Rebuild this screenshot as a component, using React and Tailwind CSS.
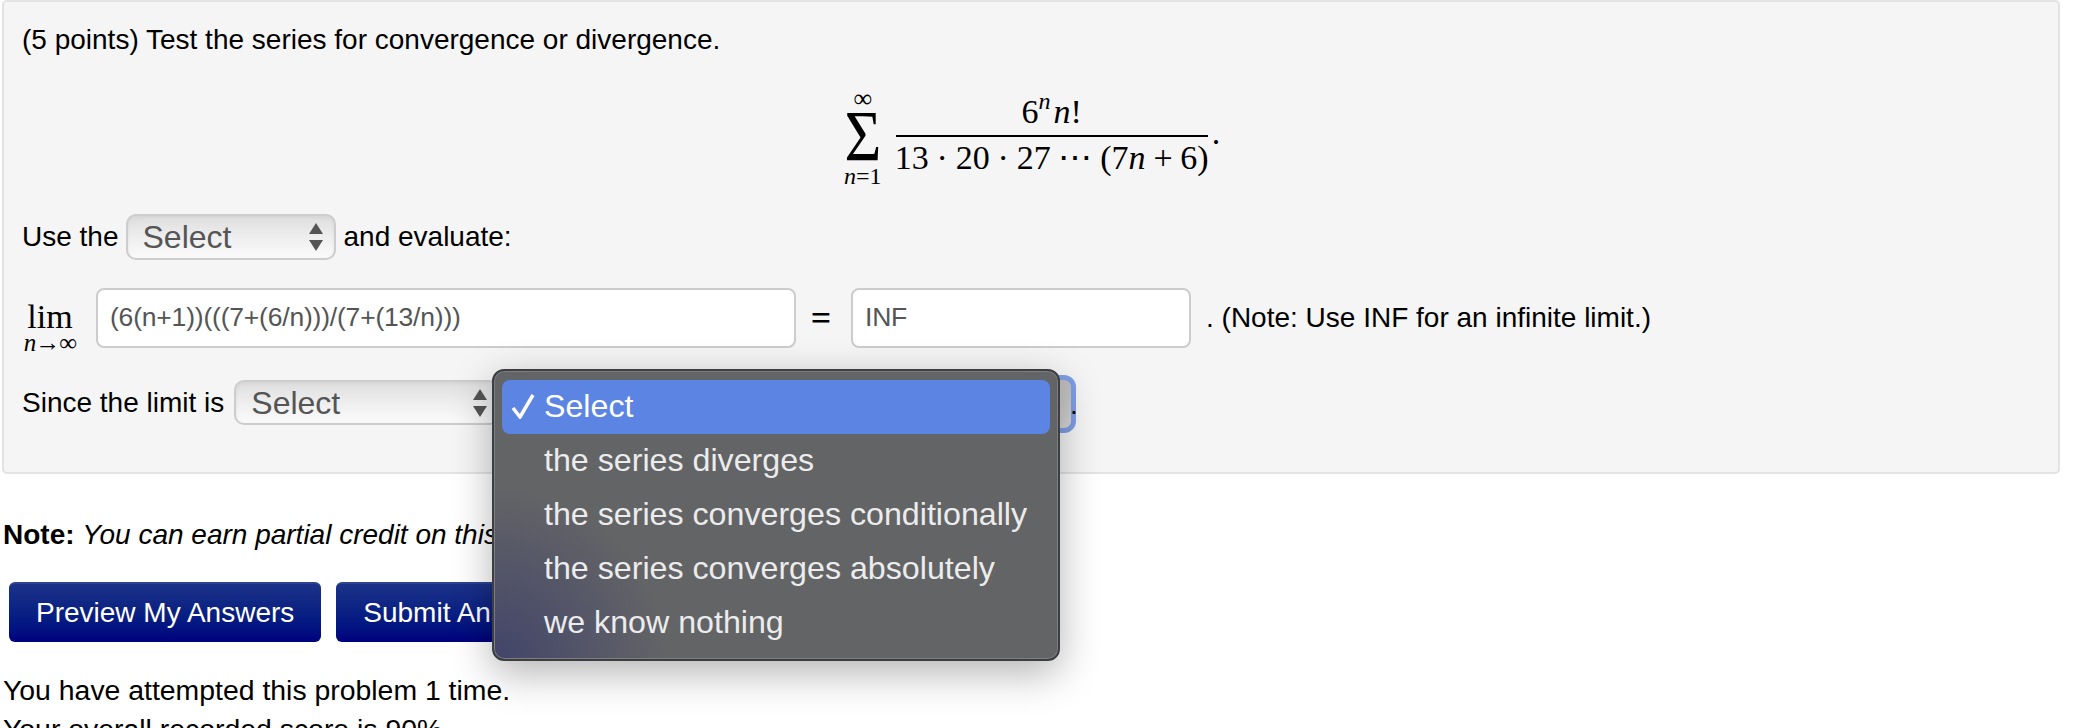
const menuOptions = [
  "the series diverges",
  "the series converges conditionally",
  "the series converges absolutely",
  "we know nothing",
];

function SelectBox({ className = "" }) {
  return (
    <div
      className={`flex shrink-0 items-center justify-between rounded-[10px] border-2 border-[#cdcdcd] bg-gradient-to-b from-[#dedede] via-[#eeeeee] to-[#fbfbfb] pl-[15px] pr-[11px] text-[32px] text-[#555555] shadow-[inset_0_1px_4px_rgba(0,0,0,0.06)] ${className}`}
    >
      <span>Select</span>
      <svg width="14" height="28" viewBox="0 0 14 28" className="fill-[#555555]">
        <path d="M7 0 L14 11 L0 11 Z" />
        <path d="M7 28 L14 17 L0 17 Z" />
      </svg>
    </div>
  );
}

function TextBox({ value, className = "" }) {
  return (
    <div
      className={`flex h-[60px] shrink-0 items-center rounded-[8px] border-2 border-[#cccccc] bg-white pl-[12px] text-[26.5px] tracking-[-0.2px] text-[#555555] ${className}`}
    >
      {value}
    </div>
  );
}

function SeriesFormula() {
  return (
    <div className="ml-[-16px] mt-[33px] flex h-[95px] justify-center font-['Liberation_Serif',serif] text-black">
      <div className="flex w-[38px] flex-col items-center">
        <span className="h-[16px] text-[26px] leading-[16px]">∞</span>
        <span className="h-[59px] scale-x-[0.88] text-[72px] leading-[59px]">Σ</span>
        <span className="h-[20px] whitespace-nowrap text-[24px] leading-[20px]">
          <i>n</i>=1
        </span>
      </div>
      <div className="ml-[14px] flex w-[312px] flex-col items-center">
        <div className="h-[44px] text-[34px] leading-[41px]">
          6<sup className="top-[-14px] text-[24px]"><i>n</i></sup>
          <i className="ml-[3px]">n</i>!
        </div>
        <div className="h-[2px] w-full bg-black"></div>
        <div className="whitespace-nowrap text-[34px] leading-[41px] [word-spacing:-0.7px]">
          13 · 20 · 27 ⋯ (7<i>n</i> + 6)
        </div>
      </div>
      <span className="ml-[4px] mt-[27px] text-[34px] leading-[30px]">.</span>
    </div>
  );
}

export default function App() {
  return (
    <div className="relative h-[728px] w-[2074px] overflow-hidden bg-white font-['Liberation_Sans',Arial,sans-serif] text-[28px] text-black">
      <div className="ml-[2px] flex h-[474px] w-[2058px] flex-col rounded-[5px] border-2 border-[#e3e3e3] bg-[#f5f5f5] pl-[18px]">
        <div className="mt-[20px] h-[36px] leading-[36px]">
          (5 points) Test the series for convergence or divergence.
        </div>
        <SeriesFormula />
        <div className="mt-[28px] flex h-[46px] items-center">
          <span>Use the</span>
          <SelectBox className="ml-[7px] h-[46px] w-[210px]" />
          <span className="ml-[8px]">and evaluate:</span>
        </div>
        <div className="mt-[28px] flex h-[60px] items-center">
          <div className="mt-[11px] flex w-[56px] shrink-0 flex-col items-center self-start font-['Liberation_Serif',serif]">
            <span className="text-[34px] leading-[36px]">lim</span>
            <span className="whitespace-nowrap text-[25px] leading-[16px] tracking-[-1px]">
              <i>n</i>→∞
            </span>
          </div>
          <TextBox value="(6(n+1))(((7+(6/n)))/(7+(13/n)))" className="ml-[18px] w-[700px]" />
          <span className="mr-[5px] w-[50px] shrink-0 text-center font-['Liberation_Serif',serif] text-[36px] font-bold">=</span>
          <TextBox value="INF" className="w-[340px]" />
          <span className="ml-[15px]">. (Note: Use INF for an infinite limit.)</span>
        </div>
        <div className="mt-[32px] flex h-[45px] items-center">
          <span>Since the limit is</span>
          <SelectBox className="ml-[10px] h-[45px] w-[266px]" />
        </div>
      </div>

      <div className="ml-[3px] mt-[41px] h-[40px] leading-[40px]">
        <b>Note:</b> <i>You can earn partial credit on this problem.</i>
      </div>

      <div className="ml-[9px] mt-[27px] flex gap-[15px]">
        <button className="h-[60px] rounded-[6px] border-t-2 border-[#2c4391] bg-gradient-to-b from-[#1c3288] to-[#00007e] px-[27px] text-[28px] text-white">
          Preview My Answers
        </button>
        <button className="h-[60px] rounded-[6px] border-t-2 border-[#2c4391] bg-gradient-to-b from-[#1c3288] to-[#00007e] px-[27px] text-[28px] text-white">
          Submit Answers
        </button>
      </div>

      <div className="ml-[3px] mt-[29px] text-[28.4px] leading-[39px]">
        <div>You have attempted this problem 1 time.</div>
        <div>Your overall recorded score is 90%.</div>
      </div>

      {/* focused select peeking out from under the open menu */}
      <div className="absolute left-[1000px] top-[375px] h-[58px] w-[76px] rounded-[12px] border-[5px] border-[#7f9fe6] bg-gradient-to-b from-[#bdbdbd] to-[#d8d8d8]"></div>
      <span className="absolute left-[1070px] top-[390px] leading-[30px]">.</span>

      <div className="absolute left-[492px] top-[369px] flex h-[292px] w-[568px] flex-col rounded-[12px] border-2 border-[#3e3e40] bg-[radial-gradient(ellipse_170px_170px_at_0%_100%,#42446a,#636466)] px-[8px] pt-[9px] text-[32.2px] leading-[52px] text-[#ececec] shadow-[0_12px_40px_rgba(0,0,0,0.3),inset_0_0_0_1px_#7c7d80]">
        <div className="flex h-[54px] items-center rounded-[8px] bg-[#5c84e3] pb-[2px] pl-[9px] text-white">
          <svg width="24" height="26" viewBox="0 0 24 26" className="fill-none stroke-white stroke-[3.5]">
            <path d="M2 15 L9 24 L22 2" />
          </svg>
          <span className="ml-[9px]">Select</span>
        </div>
        {menuOptions.map((option) => (
          <div key={option} className="h-[54px] pl-[42px]">
            {option}
          </div>
        ))}
      </div>
    </div>
  );
}
